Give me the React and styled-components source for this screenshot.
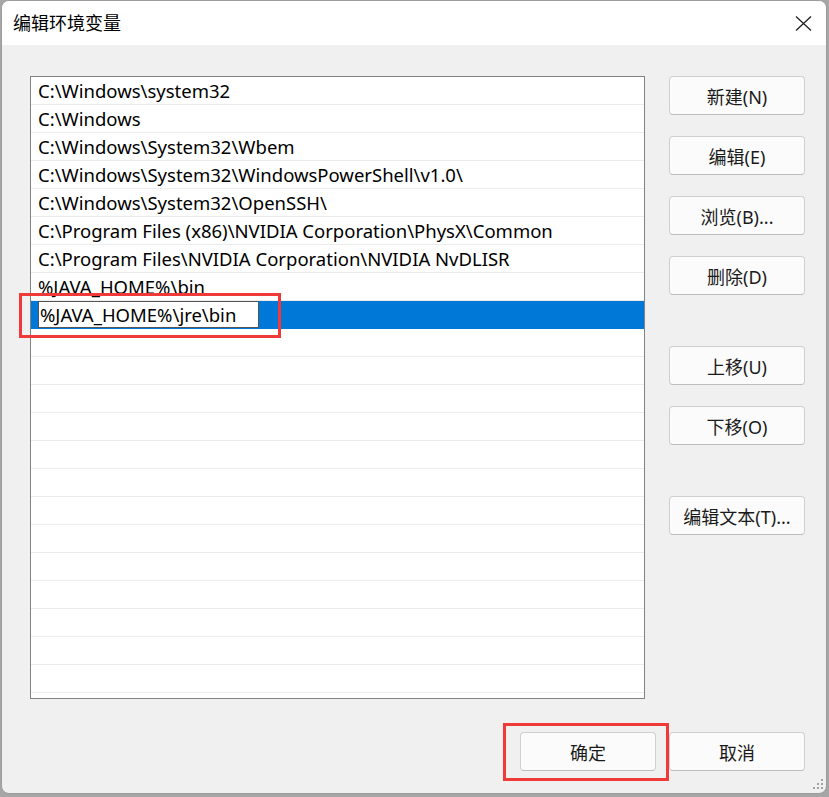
import React from "react";
import styled, { createGlobalStyle } from "styled-components";

const GlobalStyle = createGlobalStyle`
	html, body {
		margin: 0;
		padding: 0;
		background: #a6a6a6;
	}
	body {
		width: 829px;
		height: 797px;
		overflow: hidden;
		font-family: "Noto Sans", "Noto Sans CJK SC", sans-serif;
	}
`;

const Window = styled.div`
	position: relative;
	display: flex;
	flex-direction: column;
	width: 826px;
	height: 794px;
	margin-left: 1px;
	box-sizing: border-box;
	border: 1px solid #9c9c9c;
	border-radius: 8px;
	overflow: hidden;
	background: #f0f0f0;
`;

const TitleBar = styled.div`
	display: flex;
	align-items: center;
	justify-content: space-between;
	height: 44px;
	padding: 0 14px 0 11px;
	background: #ffffff;
`;

const Title = styled.div`
	font-family: "Noto Sans CJK SC", sans-serif;
	font-size: 18px;
	color: #000;
	margin-top: -3px;
`;

const Body = styled.div`
	flex: 1;
	display: flex;
	flex-direction: column;
	padding: 31px 21px 0 28px;
`;

const Main = styled.div`
	display: flex;
	gap: 24px;
`;

const List = styled.div`
	position: relative;
	width: 616px;
	height: 623px;
	box-sizing: border-box;
	border: 1px solid #828282;
	background: #fff;
	overflow: hidden;
`;

const Row = styled.div`
	height: 28px;
	box-sizing: border-box;
	border-bottom: 1px solid #ececec;
	padding-left: 7px;
	display: flex;
	align-items: center;
	font-size: 18.5px;
	color: #000;
	white-space: nowrap;
	background: ${(p) => (p.$selected ? "#0078d7" : "transparent")};
	border-bottom-color: ${(p) => (p.$selected ? "#0078d7" : "#ececec")};
`;

const EditBox = styled.div`
	height: 27px;
	width: 221px;
	margin-left: 0;
	box-sizing: border-box;
	border: 1px solid #555;
	background: #fff;
	padding-left: 1px;
	display: flex;
	align-items: center;
	font-size: 18.5px;
	color: #000;
`;

const Column = styled.div`
	display: flex;
	flex-direction: column;
	gap: 51px;
`;

const Group = styled.div`
	display: flex;
	flex-direction: column;
	gap: 21px;
`;

const Button = styled.button`
	width: 136px;
	height: 39px;
	box-sizing: border-box;
	border: 1px solid #cfcfcf;
	border-bottom-color: #bdbdbd;
	border-radius: 4px;
	background: #fbfbfb;
	font-family: "Noto Sans", "Noto Sans CJK SC", sans-serif;
	font-size: 18px;
	color: #1a1a1a;
	padding: 0;
	cursor: pointer;
`;

const Footer = styled.div`
	display: flex;
	justify-content: flex-end;
	gap: 13px;
	margin-top: 33px;
`;

const Mark = styled.div`
	position: absolute;
	border: 3px solid #f03a3a;
	box-sizing: border-box;
	pointer-events: none;
`;

const Grip = styled.svg`
	position: absolute;
	right: 2px;
	bottom: 2px;
`;

const paths = [
	"C:\\Windows\\system32",
	"C:\\Windows",
	"C:\\Windows\\System32\\Wbem",
	"C:\\Windows\\System32\\WindowsPowerShell\\v1.0\\",
	"C:\\Windows\\System32\\OpenSSH\\",
	"C:\\Program Files (x86)\\NVIDIA Corporation\\PhysX\\Common",
	"C:\\Program Files\\NVIDIA Corporation\\NVIDIA NvDLISR",
	"%JAVA_HOME%\\bin",
];

const CloseIcon = () => (
	<svg width="17" height="15" viewBox="0 0 17 15">
		<path d="M1 0.5 L16 14.5 M16 0.5 L1 14.5" stroke="#1a1a1a" strokeWidth="1.2" fill="none" />
	</svg>
);

export default function App() {
	const empty = Array.from({ length: 14 });
	return (
		<>
			<GlobalStyle />
			<Window>
				<TitleBar>
					<Title>编辑环境变量</Title>
					<CloseIcon />
				</TitleBar>
				<Body>
					<Main>
						<List>
							{paths.map((p) => (
								<Row key={p}>{p}</Row>
							))}
							<Row $selected>
								<EditBox>%JAVA_HOME%\jre\bin</EditBox>
							</Row>
							{empty.map((_, i) => (
								<Row key={i} />
							))}
						</List>
						<Column>
							<Group>
								<Button>新建(N)</Button>
								<Button>编辑(E)</Button>
								<Button>浏览(B)...</Button>
								<Button>删除(D)</Button>
							</Group>
							<Group>
								<Button>上移(U)</Button>
								<Button>下移(O)</Button>
							</Group>
							<Group>
								<Button>编辑文本(T)...</Button>
							</Group>
						</Column>
					</Main>
					<Footer>
						<Button>确定</Button>
						<Button>取消</Button>
					</Footer>
				</Body>
				<Mark style={{ left: 17, top: 292, width: 262, height: 45 }} />
				<Mark style={{ left: 501, top: 722, width: 166, height: 58 }} />
				<Grip width="12" height="12" viewBox="0 0 12 12">
					<g fill="#a3a3a3">
						<rect x="9" y="0" width="2" height="2" />
						<rect x="5" y="4" width="2" height="2" />
						<rect x="9" y="4" width="2" height="2" />
						<rect x="1" y="8" width="2" height="2" />
						<rect x="5" y="8" width="2" height="2" />
						<rect x="9" y="8" width="2" height="2" />
					</g>
				</Grip>
			</Window>
		</>
	);
}
